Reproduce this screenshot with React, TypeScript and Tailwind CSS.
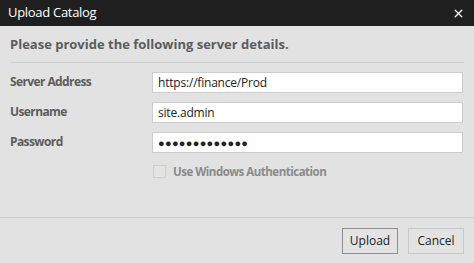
import { X } from "lucide-react";

const fields = [
  { label: "Server Address", value: "https://finance/Prod" },
  { label: "Username", value: "site.admin" },
  { label: "Password", value: "●●●●●●●●●●●●●" },
];

export default function App() {
  return (
    <div
      className="flex h-[263px] w-[474px] flex-col bg-[#e2e2e2] text-[13px]"
      style={{ fontFamily: '"Open Sans", "Noto Sans", sans-serif' }}
    >
      <div className="flex h-[26px] items-center justify-between bg-[#1f1f1f] pl-[8px] pr-[9px] text-white">
        <span className="text-[13px] tracking-[-0.3px]">Upload Catalog</span>
        <X size={13} strokeWidth={2.5} />
      </div>
      <div className="flex-1 px-[10px]">
        <div className="border-b border-[#cfcfcf] pt-[9px] pb-[7px] text-[13px] font-bold text-[#5c5c5c]">
          Please provide the following server details.
        </div>
        <div className="mt-[9px] flex flex-col gap-[9px] pr-[1px]">
          {fields.map((f) => (
            <div key={f.label} className="flex items-center">
              <label className="w-[142px] text-[12px] font-bold text-[#5c5c5c] tracking-[-0.6px]">{f.label}</label>
              <input
                readOnly
                type="text"
                defaultValue={f.value}
                className={`h-[21px] flex-1 border border-[#cdcdcd] bg-white px-[5px] text-[#222] outline-none ${
                  f.label === "Password" ? "text-[11px] tracking-[0.3px]" : "text-[12px] tracking-[-0.2px]"
                }`}
              />
            </div>
          ))}
        </div>
        <div className="mt-[10px] flex items-center pl-[143px]">
          <span className="h-[13px] w-[13px] border border-[#cfcfcf] bg-[#e4e4e4]" />
          <span className="ml-[7px] text-[11.5px] font-bold text-[#8a8a8a] tracking-[-0.5px]">Use Windows Authentication</span>
        </div>
      </div>
      <div className="flex h-[46px] items-center justify-end gap-[10px] border-t border-[#cdcdcd] pr-[10px]">
        <button className="h-[26px] w-[56px] border border-[#8f8f8f] bg-[#e3e3e3] text-[12px] text-[#222]">Upload</button>
        <button className="h-[26px] w-[56px] border border-[#c8c8c8] bg-[#e3e3e3] text-[12px] text-[#222]">Cancel</button>
      </div>
    </div>
  );
}
